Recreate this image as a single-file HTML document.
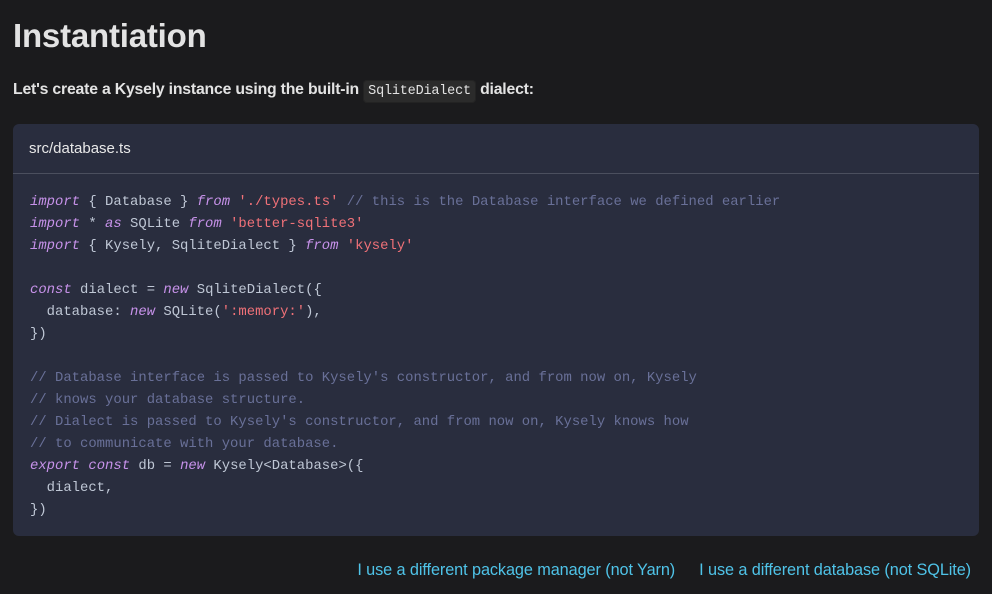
<!DOCTYPE html>
<html><head><style>
body{margin:0;background:#1b1b1d;width:992px;height:594px;overflow:hidden;font-family:"Liberation Sans",sans-serif;color:#e3e3e3}
h1{position:absolute;left:13px;top:17px;margin:0;font-size:33px;font-weight:bold;color:#e3e3e3;letter-spacing:-0.2px}
p.lead{position:absolute;left:13px;top:81px;margin:0;font-size:15.8px;font-weight:bold;color:#e3e3e3;letter-spacing:-0.2px}
p.lead code{font-family:"Liberation Mono",monospace;font-weight:normal;font-size:13.5px;background:#2b2b2b;border-radius:4px;padding:3px 4px;border:1px solid #232323}
.card{position:absolute;left:13px;top:124px;width:966px;height:412px;background:#292d3e;border-radius:6px}
.hd{border-bottom:1px solid #4b4f5e;font-size:15px;color:#e8e8e8;line-height:49px;padding-left:16px;box-sizing:border-box;height:50px}
pre{margin:0;position:absolute;left:17px;top:67px;font-family:"Liberation Mono",monospace;font-size:13.9px;line-height:22px;color:#bfc7d5}
.k{color:#c792ea;font-style:italic}.s{color:#f07178}.c{color:#697098}
.links{position:absolute;top:561px;right:21px;font-size:16.3px;color:#4fc3e8;letter-spacing:-0.1px}
.links span{margin-left:24px}
</style></head><body>
<h1>Instantiation</h1>
<p class="lead">Let's create a Kysely instance using the built-in <code>SqliteDialect</code> dialect:</p>
<div class="card"><div class="hd">src/database.ts</div>
<pre><span class="k">import</span> { Database } <span class="k">from</span> <span class="s">'./types.ts'</span> <span class="c">// this is the Database interface we defined earlier</span>
<span class="k">import</span> * <span class="k">as</span> SQLite <span class="k">from</span> <span class="s">'better-sqlite3'</span>
<span class="k">import</span> { Kysely, SqliteDialect } <span class="k">from</span> <span class="s">'kysely'</span>

<span class="k">const</span> dialect = <span class="k">new</span> SqliteDialect({
  database: <span class="k">new</span> SQLite(<span class="s">':memory:'</span>),
})

<span class="c">// Database interface is passed to Kysely's constructor, and from now on, Kysely
// knows your database structure.
// Dialect is passed to Kysely's constructor, and from now on, Kysely knows how
// to communicate with your database.</span>
<span class="k">export</span> <span class="k">const</span> db = <span class="k">new</span> Kysely&lt;Database&gt;({
  dialect,
})</pre></div>
<div class="links"><span>I use a different package manager (not Yarn)</span><span>I use a different database (not SQLite)</span></div>
</body></html>
